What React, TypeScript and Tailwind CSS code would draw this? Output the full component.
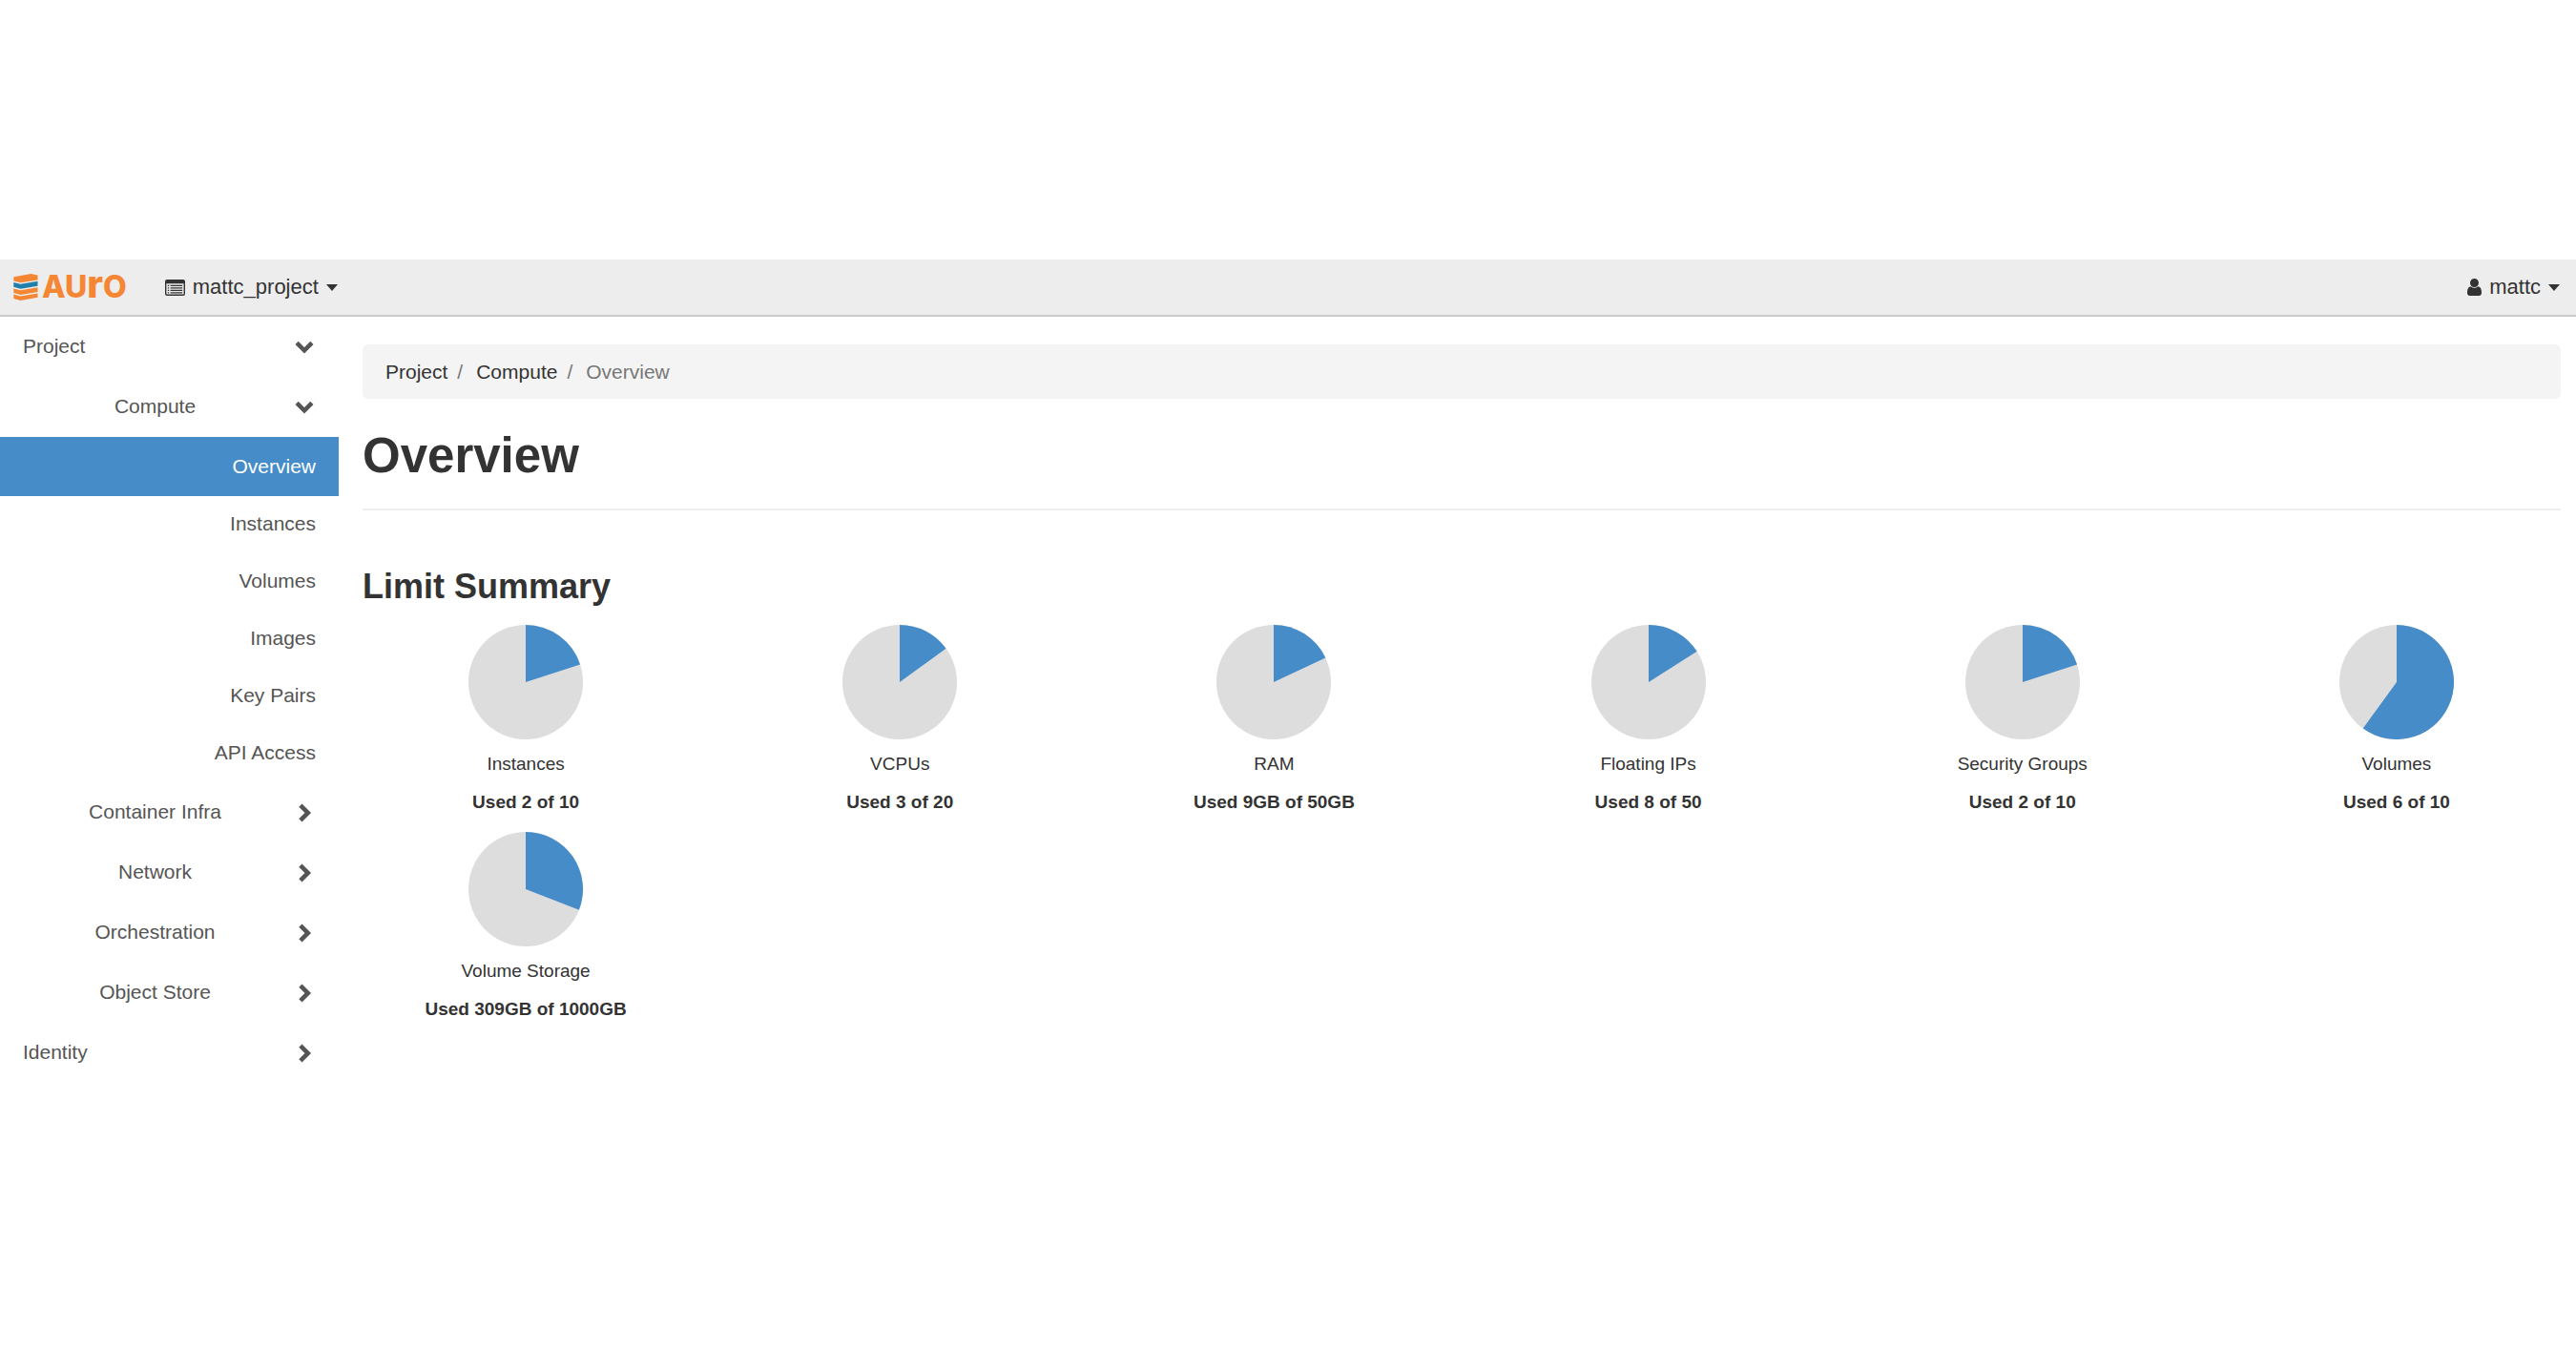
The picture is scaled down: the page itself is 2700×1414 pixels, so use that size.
type NavItem = { label: string; level: 1 | 2; open?: boolean; children?: string[] };

const NAV: NavItem[] = [
  { label: "Project", level: 1, open: true },
  {
    label: "Compute",
    level: 2,
    open: true,
    children: ["Overview", "Instances", "Volumes", "Images", "Key Pairs", "API Access"],
  },
  { label: "Container Infra", level: 2 },
  { label: "Network", level: 2 },
  { label: "Orchestration", level: 2 },
  { label: "Object Store", level: 2 },
  { label: "Identity", level: 1 },
];

type Quota = { label: string; used: number; max: number; unit?: string };

const QUOTAS: Quota[] = [
  { label: "Instances", used: 2, max: 10 },
  { label: "VCPUs", used: 3, max: 20 },
  { label: "RAM", used: 9, max: 50, unit: "GB" },
  { label: "Floating IPs", used: 8, max: 50 },
  { label: "Security Groups", used: 2, max: 10 },
  { label: "Volumes", used: 6, max: 10 },
  { label: "Volume Storage", used: 309, max: 1000, unit: "GB" },
];

function Caret() {
  return (
    <svg viewBox="0 0 12 7" className="h-[7px] w-3 fill-current" aria-hidden="true">
      <path d="M0 0h12L6 7z" />
    </svg>
  );
}

function Chevron({ open }: { open?: boolean }) {
  return (
    <svg viewBox="0 0 24 24" className="size-6 shrink-0" fill="none" stroke="currentColor" strokeWidth="4.6" aria-hidden="true">
      <path d={open ? "M4.1 7.4 12 15.3l7.9-7.9" : "M7.9 4.1l7.9 7.9-7.9 7.9"} />
    </svg>
  );
}

function ListIcon() {
  return (
    <svg viewBox="0 0 21 17" className="h-[17px] w-[21px]" aria-hidden="true">
      <path
        fill="currentColor"
        fillRule="evenodd"
        d="M2 0h17a2 2 0 0 1 2 2v13a2 2 0 0 1-2 2H2a2 2 0 0 1-2-2V2a2 2 0 0 1 2-2zM1.4 4.2V15a.6.6 0 0 0 .6.6h17a.6.6 0 0 0 .6-.6V4.2z"
      />
      <path
        stroke="currentColor"
        strokeWidth="1.2"
        d="M2.8 6.3h1.4M5.6 6.3h12.6M2.8 8.8h1.4M5.6 8.8h12.6M2.8 11.3h1.4M5.6 11.3h12.6M2.8 13.8h1.4M5.6 13.8h12.6"
      />
    </svg>
  );
}

function UserIcon() {
  return (
    <svg viewBox="0 128 1280 1536" className="h-[18px] w-[15px] fill-current" aria-hidden="true">
      <path d="M1280 1399q0 109-62.5 187t-150.5 78H213q-88 0-150.5-78T0 1399q0-85 8.5-160.5t31.5-152 58.5-131 94-89T327 832q131 128 313 128t313-128q76 0 134.5 34.5t94 89 58.5 131 31.5 152 8.5 160.5zm-256-887q0 159-112.5 271.5T640 896 368.5 783.5 256 512t112.5-271.5T640 128t271.5 112.5T1024 512z" />
    </svg>
  );
}

function Logo() {
  return (
    <a href="#home" className="flex items-center gap-1 text-[#f58634]" aria-label="Auro home">
      <svg viewBox="0 0 26 28" className="h-7 w-[26px]" aria-hidden="true">
        <path fill="#f58634" d="M.3 3.2 18.5 0 25.5 1.6V6.4L7.5 9.2.3 7.4z" />
        <path fill="#2180ab" d="M.3 8.9 7.5 10.8 25.5 7.8v5L7.5 15.8.3 13.8z" />
        <path fill="#f58634" d="M.3 15.4 7.5 17.3 25.5 14.3v4.6L7.5 21.9.3 20z" />
        <path fill="#f58634" d="M.3 21.5 7.5 23.4 25.5 20.4v4.4L7.5 28 .3 26z" />
      </svg>
      <span className="flex items-baseline pb-1 font-['Inter',sans-serif] text-[32px] leading-7 font-extrabold">
        <span>AU</span>
        <span className="text-[40px]">r</span>
        <span>O</span>
      </span>
    </a>
  );
}

function Pie({ share }: { share: number }) {
  const angle = share * 2 * Math.PI;
  const x = 60 + 60 * Math.sin(angle);
  const y = 60 - 60 * Math.cos(angle);
  return (
    <svg viewBox="0 0 120 120" className="size-[120px]" aria-hidden="true">
      <circle cx="60" cy="60" r="60" fill="#dddddd" />
      <path fill="#468cc8" d={`M60 60V0A60 60 0 ${share > 0.5 ? 1 : 0} 1 ${x} ${y}z`} />
    </svg>
  );
}

function Sidebar() {
  return (
    <nav className="w-[355px] shrink-0 text-[21px] leading-7 text-[#555]" aria-label="Main">
      <ul>
        {NAV.map((item) => (
          <li key={item.label}>
            <button type="button" aria-expanded={!!item.open} className="flex h-[63px] w-full items-center gap-1.5 px-6">
              <span className={item.level === 1 ? "flex-1 pb-0.5 text-left" : "flex-1 pb-0.5 text-center"}>{item.label}</span>
              <Chevron open={item.open} />
            </button>
            {item.children && (
              <ul>
                {item.children.map((child) => (
                  <li key={child}>
                    <a
                      href={`#${child}`}
                      className={
                        child === "Overview"
                          ? "flex h-[62px] items-center justify-end bg-[#468cc8] px-6 text-white"
                          : "flex h-[60px] items-center justify-end px-6 pb-0.5"
                      }
                    >
                      {child}
                    </a>
                  </li>
                ))}
              </ul>
            )}
          </li>
        ))}
      </ul>
    </nav>
  );
}

export default function App() {
  return (
    <div className="min-h-screen overflow-x-clip bg-white pt-[272px] font-['Liberation_Sans',Arial,sans-serif] text-[#333]">
      <header className="flex h-[60px] items-center justify-between border-b-2 border-[#ccc] bg-[#ededed] pr-[17px] pl-3.5 text-[22px] leading-7">
        <div className="flex items-center gap-10">
          <Logo />
          <button type="button" className="flex items-center gap-2">
            <ListIcon />
            <span>mattc_project</span>
            <Caret />
          </button>
        </div>
        <button type="button" className="flex items-center gap-2">
          <UserIcon />
          <span>mattc</span>
          <Caret />
        </button>
      </header>

      <div className="flex">
        <Sidebar />
        <main className="min-w-0 flex-1 pt-[29px] pr-4 pl-[25px]">
          <nav aria-label="Breadcrumb" className="rounded-md bg-[#f4f4f4] px-6 py-3.5 text-[21px] leading-[29px]">
            <ol className="flex">
              <li>
                <a href="#project">Project</a>
                <span className="mr-3.5 ml-2.5 text-[#777]">/</span>
              </li>
              <li>
                <a href="#compute">Compute</a>
                <span className="mr-3.5 ml-2.5 text-[#777]">/</span>
              </li>
              <li className="text-[#777]" aria-current="page">Overview</li>
            </ol>
          </nav>

          <h1 className="mt-[30px] border-b-2 border-[#eee] pb-[25px] text-[51px] leading-[60px] font-bold">Overview</h1>

          <section>
            <h2 className="mt-15 text-[36px] leading-10 font-bold">Limit Summary</h2>
            <ul className="mt-5 -mr-6 -ml-[25px] grid grid-cols-6">
              {QUOTAS.map((q) => (
                <li key={q.label} className="flex flex-col items-center gap-3 pb-[17px] text-[19px] leading-7">
                  <Pie share={q.used / q.max} />
                  <span>{q.label}</span>
                  <strong>
                    {`Used ${q.used}${q.unit ?? ""} of ${q.max}${q.unit ?? ""}`}
                  </strong>
                </li>
              ))}
            </ul>
          </section>
        </main>
      </div>
    </div>
  );
}
